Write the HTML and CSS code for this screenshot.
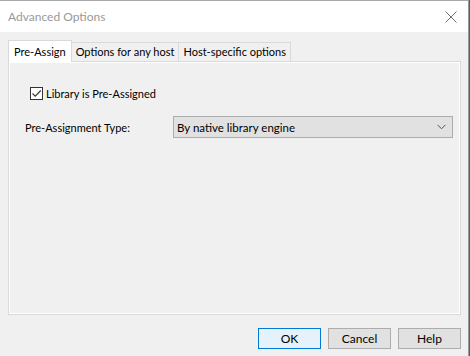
FILE: index.html
```html
<!DOCTYPE html>
<html lang="en">
<head>
  <meta charset="UTF-8" />
  <title>Advanced Options</title>
  <link rel="stylesheet" href="styles.css">
</head>
<body>

<div class="window">
  <div class="titlebar">
    <span class="title">Advanced Options</span>
    <svg class="close" width="12" height="12" viewBox="0 0 12 12">
      <path d="M0.5 0.5 L11.5 11.5 M11.5 0.5 L0.5 11.5" stroke="#6f6f6f" stroke-width="1" fill="none" />
    </svg>
  </div>

  <div class="content">
    <div class="tabs">
      <div class="tab active">Pre-Assign</div>
      <div class="tab">Options for any host</div>
      <div class="tab">Host-specific options</div>
    </div>

    <div class="panel">
      <label class="check-row">
        <span class="checkbox">
          <svg width="11" height="11" viewBox="0 0 11 11">
            <path d="M1.5 5.5 L4.2 8.2 L9.8 2.5" stroke="#333" stroke-width="1.1" fill="none" />
          </svg>
        </span>
        Library is Pre-Assigned
      </label>

      <div class="field-row">
        <span class="field-label">Pre-Assignment Type:</span>
        <div class="select">
          <span>By native library engine</span>
          <svg width="9" height="6" viewBox="0 0 9 6">
            <path d="M0.5 0.8 L4.5 4.8 L8.5 0.8" stroke="#555" stroke-width="1" fill="none" />
          </svg>
        </div>
      </div>
    </div>

    <div class="buttons">
      <button class="btn default">OK</button>
      <button class="btn">Cancel</button>
      <button class="btn">Help</button>
    </div>
  </div>
</div>

</body>
</html>
```

FILE: styles.css
```css
* {
  box-sizing: border-box;
}

html, body {
  margin: 0;
  padding: 0;
  background: #f0f0f0;
}

body {
  font-family: Lato, "Segoe UI", sans-serif;
  font-size: 11px;
  color: #000;
}

.window {
  width: 469px;
  height: 356px;
  border-top: 1px solid #aaaaaa;
  border-right: 1px solid #9a9a9a;
  box-shadow: 1px 0 0 #5a5a6a;
  background: #f0f0f0;
}

.titlebar {
  height: 31px;
  background: white;
  display: flex;
  align-items: center;
  justify-content: space-between;
  padding: 0 11px 0 8px;
}

.title {
  color: #999;
  font-size: 12px;
}

.close {
  margin-top: 1px;
}

.content {
  padding: 8px 7px 0 8px;
}

.tabs {
  display: flex;
  align-items: flex-start;
  height: 21px;
  position: relative;
  z-index: 1;
}

.tab {
  height: 19px;
  margin-top: 2px;
  padding: 0 4px;
  line-height: 18px;
  border: 1px solid #d9d9d9;
  border-bottom: none;
  border-left: none;
  background: #f0f0f0;
  white-space: nowrap;
}

.tab.active {
  height: 22px;
  margin-top: 0;
  padding: 0 5px;
  line-height: 21px;
  background: white;
  border-left: 1px solid #d9d9d9;
}

.panel {
  height: 254px;
  border: 1px solid #d9d9d9;
  box-shadow: inset 1px 1px 0 #fff, inset -1px -1px 0 #fff;
  background: #f0f0f0;
  padding: 0 7px 0 16px;
}

.check-row {
  display: flex;
  align-items: center;
  gap: 3px;
  margin-top: 25px;
  margin-left: 5px;
}

.checkbox {
  width: 13px;
  height: 13px;
  border: 1px solid #333;
  background: white;
  display: flex;
  flex-shrink: 0;
}

.field-row {
  display: flex;
  align-items: center;
  margin-top: 16px;
}

.field-label {
  width: 148px;
  flex-shrink: 0;
}

.select {
  width: 280px;
  height: 22px;
  flex-shrink: 0;
  border: 1px solid #adadad;
  background: #e1e1e1;
  display: flex;
  align-items: center;
  justify-content: space-between;
  padding: 0 6px 0 3px;
  font-size: 11.5px;
}

.buttons {
  display: flex;
  justify-content: flex-end;
  gap: 7px;
  padding-top: 13px;
}

.btn {
  width: 63px;
  height: 21px;
  border: 1px solid #adadad;
  background: #e1e1e1;
  font-family: inherit;
  font-size: 12px;
  padding: 0;
  color: #000;
}

.btn.default {
  border-color: #0078d7;
  background: #e5f1fb;
}
```
